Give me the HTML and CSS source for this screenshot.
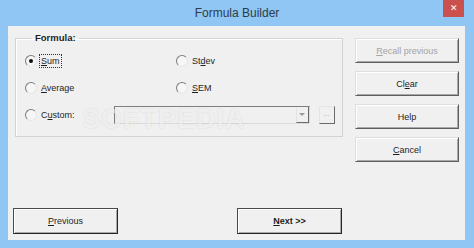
FILE: index.html
```html
<!DOCTYPE html>
<html>
    <head>
        <title>Formula Builder</title>
        <meta charset="utf-8"/>
        <link rel="stylesheet" href="styles.css">
    </head>
    <body>
        <div class="window">
            <div class="titlebar">
                <span></span>
                <span class="title">Formula Builder</span>
                <span class="close">&#x2715;</span>
            </div>

            <div class="client">
                <div class="top">
                    <fieldset class="group">
                        <legend>Formula:</legend>
                        <div class="options">
                            <label class="radio"><span class="dot checked"></span><span class="focus"><u>S</u>um</span></label>
                            <label class="radio"><span class="dot"></span><span>St<u>d</u>ev</span></label>
                            <label class="radio"><span class="dot"></span><span><u>A</u>verage</span></label>
                            <label class="radio"><span class="dot"></span><span><u>S</u>EM</span></label>
                            <div class="custom">
                                <label class="radio"><span class="dot"></span><span>C<u>u</u>stom:</span></label>
                                <div class="combo"><span class="arrow"></span></div>
                                <div class="dots">...</div>
                            </div>
                        </div>
                    </fieldset>

                    <div class="side">
                        <button class="btn disabled"><u>R</u>ecall previous</button>
                        <button class="btn">Cl<u>e</u>ar</button>
                        <button class="btn">Help</button>
                        <button class="btn"><u>C</u>ancel</button>
                    </div>
                </div>

                <div class="bottom">
                    <button class="btn wide"><u>P</u>revious</button>
                    <button class="btn wide strong"><u>N</u>ext &gt;&gt;</button>
                </div>

                <div class="mark">SOFTPEDIA</div>
            </div>
        </div>
    </body>
</html>
```

FILE: styles.css
```css
* {
    box-sizing: border-box;
}
body {
    margin: 0;
    font-family: 'Liberation Sans', Arial, sans-serif;
    font-size: 9px;
    color: #1e1e1e;
}
.window {
    width: 474px;
    height: 248px;
    background: #8fc6f3;
    display: flex;
    flex-direction: column;
}

.titlebar {
    height: 26px;
    display: grid;
    grid-template-columns: 1fr auto 1fr;
    align-items: start;
}
.title {
    font-size: 12px;
    line-height: 26px;
    color: #2e3b4a;
}
.close {
    justify-self: end;
    width: 21px;
    height: 17px;
    margin-right: 10px;
    background: #c9504c;
    color: #fff;
    font-size: 9px;
    line-height: 17px;
    text-align: center;
}

.client {
    position: relative;
    flex: 1;
    margin: 0 9px 8px 8px;
    background: #f0f0f0;
    display: flex;
    flex-direction: column;
    justify-content: space-between;
    padding: 7px 0 6px;
}
.top {
    display: flex;
    align-items: flex-start;
}

.group {
    margin: 0 0 0 7px;
    width: 328px;
    height: 104px;
    padding: 4px 0 0 9px;
    border: 1px solid #d3d3d3;
    box-shadow: inset 1px 1px #fff;
}
.group legend {
    margin-left: 7px;
    padding: 0 3px;
    font-size: 9.5px;
    line-height: 10px;
    font-weight: bold;
}
.options {
    display: grid;
    grid-template-columns: 151px 1fr;
    grid-auto-rows: 27px;
    align-items: center;
}
.radio {
    display: flex;
    align-items: center;
    gap: 4px;
}
.dot {
    position: relative;
    width: 12px;
    height: 12px;
    border-radius: 50%;
    border: 1px solid;
    border-color: #7c7c7c #e6e6e6 #e6e6e6 #7c7c7c;
    background: #f6f6f6;
}
.dot.checked::after {
    content: '';
    position: absolute;
    left: 3px;
    top: 3px;
    width: 4px;
    height: 4px;
    border-radius: 50%;
    background: #111;
}
.focus {
    outline: 1px dotted #333;
    outline-offset: 1px;
}

.custom {
    grid-column: 1 / 3;
    display: flex;
    align-items: center;
}
.combo {
    width: 196px;
    height: 18px;
    margin-left: 39px;
    border: 1px solid;
    border-color: #7e7e7e #dadada #dadada #7e7e7e;
    background: #f0f0f0;
    display: flex;
    justify-content: flex-end;
}
.arrow {
    width: 13px;
    height: 16px;
    border-left: 1px solid #e4e4e4;
    border-right: 1px solid #6a6a6a;
    border-bottom: 1px solid #6a6a6a;
    display: flex;
    align-items: center;
    justify-content: center;
}
.arrow::after {
    content: '';
    border-left: 3px solid transparent;
    border-right: 3px solid transparent;
    border-top: 3px solid #9a9a9a;
}
.dots {
    width: 16px;
    height: 18px;
    margin-left: 9px;
    border: 1px solid;
    border-color: #e4e4e4 #6a6a6a #6a6a6a #e4e4e4;
    color: #a6a6a6;
    font-size: 7px;
    line-height: 14px;
    text-align: center;
}

.side {
    margin: 5px 0 0 12px;
    width: 104px;
    display: flex;
    flex-direction: column;
    gap: 8px;
}
.btn {
    height: 25px;
    padding: 0;
    font-family: 'Liberation Sans', Arial, sans-serif;
    font-size: 9px;
    color: #1e1e1e;
    background: #f0f0f0;
    border: 1px solid;
    border-color: #dedede #5e5e5e #5e5e5e #dedede;
    box-shadow: inset 1px 1px #fff, inset -1px -1px #a9a9a9;
}
.btn.disabled {
    color: #a3a3a3;
}

.bottom {
    display: flex;
    gap: 119px;
    margin-left: 5px;
}
.btn.wide {
    width: 105px;
    height: 26px;
    border-color: #4a4a4a #262626 #262626 #4a4a4a;
}
.btn.strong {
    font-weight: bold;
}

/* watermark, kept over the empty combo so it clears the labels */
.mark {
    position: absolute;
    left: 74px;
    top: 78px;
    font-size: 27px;
    font-weight: bold;
    letter-spacing: 1px;
    color: rgba(255, 255, 255, 0.6);
    text-shadow: 0 0 2px rgba(0, 0, 0, 0.12);
    pointer-events: none;
}
```
